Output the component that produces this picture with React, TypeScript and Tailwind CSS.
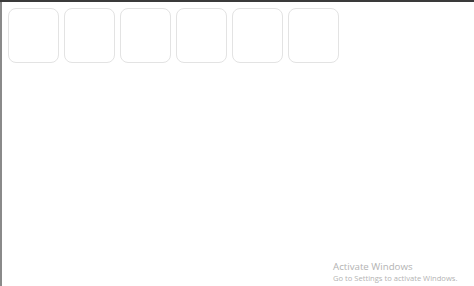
export default function App() {
  const slots = [0, 1, 2, 3, 4, 5];

  return (
    <div className="h-[286px] w-[474px] overflow-hidden bg-white font-['Liberation_Sans',sans-serif]">
      <div className="h-[2px] w-full bg-[#3a3a3a]" />
      <div className="flex h-[284px] w-full">
        <div className="w-[2px] bg-[#8a8a8a]" />
        <div className="relative flex-1">
          <div className="flex gap-[5px] pl-[6px] pt-[6px]">
            {slots.map((i) => (
              <div
                key={i}
                className="h-[55px] w-[51px] rounded-[8px] border border-[#e3e3e3] bg-white"
              />
            ))}
          </div>
          <div className="absolute left-[331px] top-[260px] text-[#b3b3b3] font-['Open_Sans',sans-serif] leading-none">
            <div className="text-[9.7px]">Activate Windows</div>
            <div className="mt-[3px] text-[7.6px]">Go to Settings to activate Windows.</div>
          </div>
        </div>
      </div>
    </div>
  );
}
